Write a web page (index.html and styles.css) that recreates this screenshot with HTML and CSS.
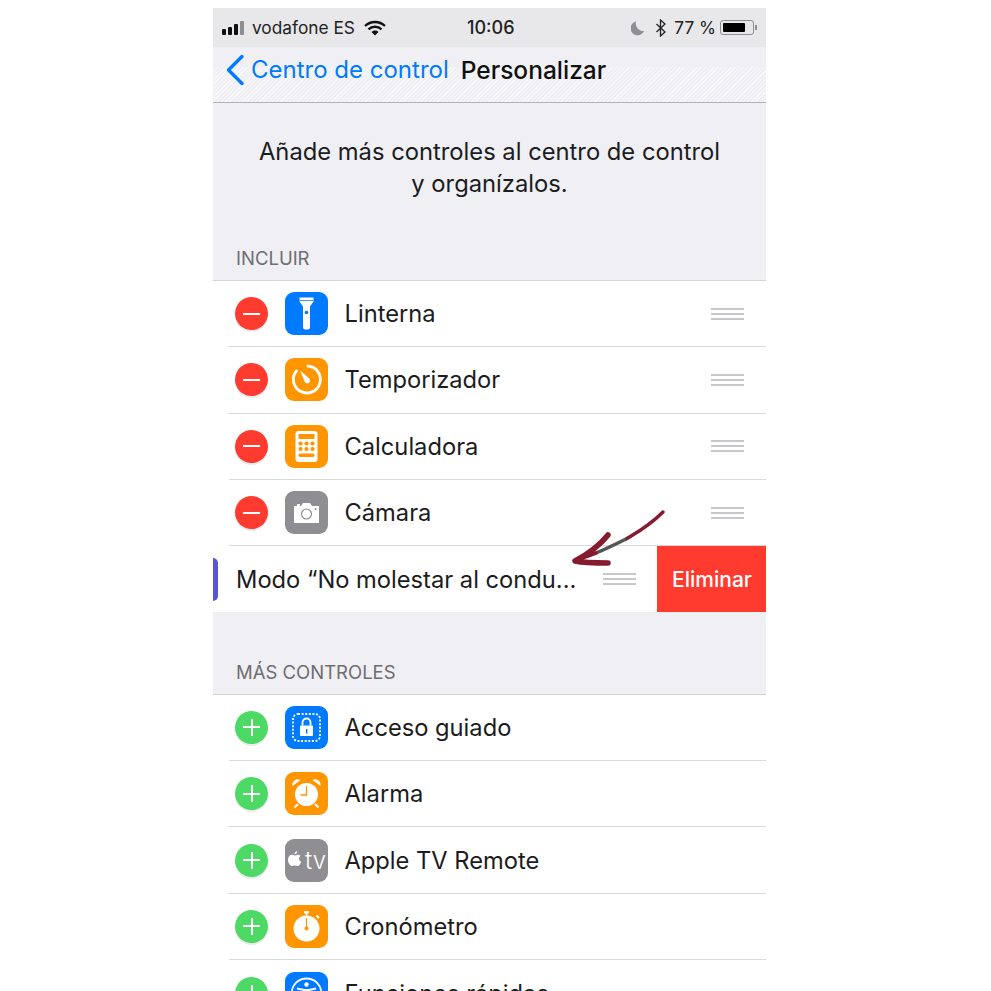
FILE: index.html
```html
<!DOCTYPE html>
<html lang="es">
<head>
    <meta charset="UTF-8">
    <title>Personalizar</title>
    <link rel="stylesheet" href="styles.css">
</head>
<body>
    <div class="phone">
        <div class="status-bar">
            <div class="status-left">
                <div class="signal"><i></i><i></i><i></i><i class="off"></i></div>
                <span>vodafone ES</span>
                <svg class="wifi" width="22" height="16" viewBox="0 0 22 16"><path d="M1 6a14.500 14.500 0 0 1 20 0" fill="none" stroke="#111" stroke-width="2.400"/><path d="M4.500 9.300a9.500 9.500 0 0 1 13 0" fill="none" stroke="#111" stroke-width="2.400"/><path d="M7.500 12a5 5 0 0 1 7 0L11 15.500z" fill="#111"/></svg>
            </div>
            <div class="status-time">10:06</div>
            <div class="status-right">
                <svg width="14" height="16" viewBox="0 0 14 16"><path d="M5 1.500a7 7 0 1 0 8 9.500a7.500 7.500 0 0 1-8-9.500z" fill="#8e8e93"/></svg>
                <svg class="bt" width="12" height="18" viewBox="0 0 12 18"><path d="M1.500 5l8.500 8-4.500 4V1l4.500 4-8.500 8" fill="none" stroke="#222" stroke-width="1.300"/></svg>
                <span>77 %</span>
                <div class="battery"><div class="battery-fill"></div></div>
                <div class="battery-tip"></div>
            </div>
        </div>
        <div class="nav-bar">
            <svg class="back" width="20" height="32" viewBox="0 0 20 32"><path d="M17 2.500L3.500 16L17 29.500" fill="none" stroke="#007aff" stroke-width="3.400" stroke-linecap="round" stroke-linejoin="round"/></svg>
            <span class="nav-back">Centro de control</span>
            <span class="nav-title">Personalizar</span>
        </div>
        <p class="intro">Añade más controles al centro de control<br>y organízalos.</p>

        <div class="section-label first">INCLUIR</div>
        <div class="list list-first">
            <div class="row">
                <div class="round minus"></div>
                <div class="app blue">
                    <svg width="43" height="43" viewBox="0 0 43 43"><path d="M14.500 5.500h14v4l-3.500 5V35a2.500 2.500 0 0 1-2.500 2.500h-2A2.500 2.500 0 0 1 18 35V14.500l-3.500-5z" fill="#fff"/><path d="M14.500 8.500h14" stroke="#007aff" stroke-width=".8"/><circle cx="21.500" cy="20.500" r="1.800" fill="#007aff"/></svg>
                </div>
                <div class="row-text">Linterna</div>
                <div class="handle"></div>
            </div>
            <div class="row">
                <div class="round minus"></div>
                <div class="app orange">
                    <svg width="43" height="43" viewBox="0 0 43 43"><path d="M23 8a13.500 13.500 0 1 1-11.500 4.800" fill="none" stroke="#fff" stroke-width="2.800" stroke-linecap="round"/><path d="M15 12.500l8.800 7.500a2.900 2.900 0 1 1-4 4z" fill="#fff"/></svg>
                </div>
                <div class="row-text">Temporizador</div>
                <div class="handle"></div>
            </div>
            <div class="row">
                <div class="round minus"></div>
                <div class="app orange">
                    <svg width="43" height="43" viewBox="0 0 43 43"><rect x="10.500" y="6" width="22" height="31" rx="3" fill="#fff"/><rect x="13.500" y="9" width="16" height="5" fill="#ff9500"/><g fill="#ff9500"><circle cx="15.500" cy="18.500" r="2.100"/><circle cx="21.500" cy="18.500" r="2.100"/><circle cx="27.500" cy="18.500" r="2.100"/><circle cx="15.500" cy="24" r="2.100"/><circle cx="21.500" cy="24" r="2.100"/><circle cx="27.500" cy="24" r="2.100"/><rect x="13.500" y="28.500" width="16" height="3.600" rx="1.800"/></g></svg>
                </div>
                <div class="row-text">Calculadora</div>
                <div class="handle"></div>
            </div>
            <div class="row">
                <div class="round minus"></div>
                <div class="app gray">
                    <svg width="43" height="43" viewBox="0 0 43 43"><path d="M9 15h7l2-3h7l2 3h7v17H9z" fill="#fff"/><rect x="12" y="13" width="3" height="2" fill="#fff"/><circle cx="21.500" cy="23" r="5" fill="none" stroke="#8e8e93" stroke-width="1.200"/><circle cx="30.500" cy="18" r="1" fill="#8e8e93"/></svg>
                </div>
                <div class="row-text">Cámara</div>
                <div class="handle"></div>
            </div>
            <div class="row row-swiped">
                <div class="app-sliver"></div>
                <div class="row-text">Modo “No molestar al condu...</div>
                <div class="handle"></div>
                <div class="delete">Eliminar</div>
            </div>
        </div>

        <div class="section-label">MÁS CONTROLES</div>
        <div class="list">
            <div class="row">
                <div class="round plus"></div>
                <div class="app blue">
                    <svg width="43" height="43" viewBox="0 0 43 43"><rect x="8" y="8" width="27" height="27" rx="5" fill="none" stroke="#fff" stroke-width="1.800" stroke-dasharray="2 1.600"/><rect x="15" y="19.500" width="13" height="10.500" rx="1" fill="#fff"/><path d="M17.500 19.500v-3a4 4 0 0 1 8 0v3" fill="none" stroke="#fff" stroke-width="1.800"/><rect x="21" y="23" width="1.400" height="4.500" fill="#007aff"/></svg>
                </div>
                <div class="row-text">Acceso guiado</div>
            </div>
            <div class="row">
                <div class="round plus"></div>
                <div class="app orange">
                    <svg width="43" height="43" viewBox="0 0 43 43"><circle cx="21.500" cy="22.500" r="11.500" fill="#fff"/><path d="M7.500 14a5.500 5.500 0 0 1 8-6z M35.500 14a5.500 5.500 0 0 0-8-6z" fill="#fff"/><path d="M13 32l-3.500 3.500M30 32l3.500 3.500" stroke="#fff" stroke-width="1.800"/><path d="M21.500 14v9h-6" fill="none" stroke="#ff9500" stroke-width="1.300"/></svg>
                </div>
                <div class="row-text">Alarma</div>
            </div>
            <div class="row">
                <div class="round plus"></div>
                <div class="app gray app-tv">
                    <svg width="15" height="17" viewBox="0 0 15 17"><path d="M7.500 4.500c1.200 0 2-.8 3.400-.8 1 0 2 .4 2.700 1.400-2.300 1.400-1.900 4.600.6 5.600-.7 2-2.100 4.300-3.500 4.300-1 0-1.400-.6-2.800-.6s-1.900.6-2.900.6C3 15 1 11.800 1 8.800c0-3 1.900-5 3.800-5 1.200 0 2 .7 2.700.7zM7.400 3.300C7.300 1.800 8.600.4 10.200.2c.2 1.600-1.300 3.100-2.800 3.100z" fill="#fff"/></svg>
                    <span>tv</span>
                </div>
                <div class="row-text">Apple TV Remote</div>
            </div>
            <div class="row">
                <div class="round plus"></div>
                <div class="app orange">
                    <svg width="43" height="43" viewBox="0 0 43 43"><circle cx="21.500" cy="23.500" r="13" fill="#fff"/><rect x="19" y="6" width="5" height="2.400" rx="1" fill="#fff"/><rect x="20.700" y="8" width="1.600" height="3" fill="#fff"/><path d="M31.500 10.500l2.500 2.500" stroke="#fff" stroke-width="2.200"/><path d="M21.500 13v9" stroke="#ff9500" stroke-width="1.200"/><circle cx="21.500" cy="23.500" r="2" fill="#ff9500"/></svg>
                </div>
                <div class="row-text">Cronómetro</div>
            </div>
            <div class="row">
                <div class="round plus"></div>
                <div class="app blue">
                    <svg width="43" height="43" viewBox="0 0 43 43"><circle cx="21.500" cy="21.500" r="15" fill="none" stroke="#fff" stroke-width="1.800"/><circle cx="21.500" cy="12.500" r="2.200" fill="#fff"/><path d="M12 16.500l7 1.500h5l7-1.500M21.500 18v6l-4 7M21.500 24l4 7" fill="none" stroke="#fff" stroke-width="2"/></svg>
                </div>
                <div class="row-text">Funciones rápidas</div>
            </div>
        </div>

        <!-- arrow drawn over the screenshot -->
        <svg class="arrow" width="110" height="70" viewBox="0 0 110 70">
            <path d="M93 6C78 21 66 27 56 33" fill="none" stroke="#861b30" stroke-width="3.500" stroke-linecap="round"/>
            <path d="M56 33C46 38 36 43 26 47" fill="none" stroke="#555" stroke-width="3.500"/>
            <path d="M26 47C18 50 12 52 5 55" fill="none" stroke="#861b30" stroke-width="4" stroke-linecap="round"/>
            <path d="M38 29C30 39 18 48 5 55C15 57 27 57 38 57" fill="none" stroke="#861b30" stroke-width="5.500" stroke-linecap="round" stroke-linejoin="round"/>
        </svg>
    </div>
</body>
</html>
```
FILE: styles.css
```css
html, body {
    margin: 0;
    height: 991px;
    overflow: hidden;
    background: #fff;
}
body {
    font-family: Inter, Roboto, "Liberation Sans", sans-serif;
    color: #111;
}
.phone {
    position: relative;
    width: 553px;
    height: 983px;
    margin: 8px 0 0 213px;
    background: #efeff4;
    overflow: hidden;
}
.status-bar {
    position: relative;
    display: flex;
    justify-content: space-between;
    align-items: center;
    height: 39px;
    padding: 0 9px 0 9px;
    background: #e8e8ea;
    font-size: 17.300px;
    color: #222;
}
.status-left, .status-right {
    display: flex;
    align-items: center;
}
.signal {
    display: flex;
    align-items: flex-end;
    gap: 2px;
    height: 14px;
    margin-right: 8px;
}
.signal i {
    width: 4px;
    height: 6px;
    background: #111;
    border-radius: 1px;
}
.signal i:nth-child(2) { height: 8px; }
.signal i:nth-child(3) { height: 11px; }
.signal i:nth-child(4) { height: 14px; }
.signal i.off { background: #8e8e93; }
.wifi { margin-left: 9px; }
.status-time {
    position: absolute;
    left: 254px;
    font-size: 18px;
    font-weight: 500;
}
.status-right svg { margin-right: 10px; }
.status-right .bt { margin-right: 7px; }
.battery {
    width: 34px;
    height: 15px;
    margin-left: 4px;
    padding: 2px;
    box-sizing: border-box;
    border: 1px solid #8e8e93;
    border-radius: 3px;
}
.battery-fill {
    width: 77%;
    height: 100%;
    background: #000;
    border-radius: 1px;
}
.battery-tip {
    width: 2px;
    height: 5px;
    margin-left: 1px;
    background: #8e8e93;
}
.nav-bar {
    display: flex;
    align-items: center;
    height: 56px;
    padding: 0 0 10px 12px;
    box-sizing: border-box;
    border-bottom: 1px solid #b4b4b8;
    background:
        repeating-linear-gradient(135deg, rgba(255, 255, 255, 0.55) 0 1px, rgba(255, 255, 255, 0) 1px 3px) 0 20px / 100% 35px no-repeat,
        #f0f0f4;
}
.back { margin-right: 6px; }
.nav-back {
    font-size: 24px;
    color: #007aff;
}
.nav-title {
    margin-left: 12px;
    font-size: 24.500px;
    font-weight: 500;
    color: #111;
}
.intro {
    margin: 0;
    padding-top: 33px;
    height: 123px;
    box-sizing: border-box;
    text-align: center;
    font-size: 23.750px;
    line-height: 32px;
    color: #1c1c1e;
}
.section-label {
    display: flex;
    align-items: flex-end;
    height: 80.600px;
    padding: 0 0 11px 23px;
    box-sizing: border-box;
    font-size: 18.500px;
    color: #6d6d72;
}
.section-label.first {
    height: 54px;
}
.list {
    background: #fff;
    border-top: 1px solid #d4d4d8;
    border-bottom: 1px solid #d4d4d8;
}
.list-first {
    border-bottom-color: #eeeef2;
}
.row {
    display: flex;
    align-items: center;
    height: 66.300px;
    margin-left: 16px;
    padding: 0 22px 0 6px;
    box-sizing: border-box;
    border-bottom: 1px solid #d9d9dc;
    background: #fff;
}
.row:last-child { border-bottom: none; }
.round {
    position: relative;
    flex: none;
    width: 33px;
    height: 33px;
    border-radius: 50%;
    box-shadow: 0 2px 0 #ececf0;
}
.round::before, .plus::after {
    content: "";
    position: absolute;
    left: 8px;
    top: 15.500px;
    width: 17px;
    height: 2px;
    background: #fff;
}
.plus::after {
    left: 15.500px;
    top: 8px;
    width: 2px;
    height: 17px;
}
.minus { background: #ff3b30; }
.plus { background: #4cd964; }
.app {
    display: flex;
    align-items: center;
    justify-content: center;
    flex: none;
    width: 43px;
    height: 43px;
    margin-left: 17px;
    border-radius: 9px;
}
.blue { background: #007aff; }
.orange { background: #ff9500; }
.gray { background: #8e8e93; }
.app-tv {
    gap: 3px;
    color: #fff;
    font-size: 24px;
    font-weight: 300;
}
.app-tv svg { margin-top: -1px; }
.row-text {
    flex: 1;
    margin-left: 16.500px;
    font-size: 23.700px;
    color: #1c1c1e;
    white-space: nowrap;
}
.handle {
    position: relative;
    flex: none;
    width: 33px;
    height: 12px;
    border-top: 2px solid #c7c7cc;
    border-bottom: 2px solid #c7c7cc;
    box-sizing: border-box;
}
.handle::before {
    content: "";
    position: absolute;
    left: 0;
    right: 0;
    top: 3px;
    height: 2px;
    background: #c7c7cc;
}
.row-swiped {
    position: relative;
    margin-left: 0;
    padding: 0;
    height: 66px;
}
.app-sliver {
    flex: none;
    width: 5px;
    height: 43px;
    background: #5856d6;
    border-radius: 0 8px 8px 0;
}
.row-swiped .row-text {
    flex: none;
    width: 367px;
    margin-left: 18px;
}
.delete {
    display: flex;
    align-items: center;
    justify-content: center;
    flex: none;
    width: 110px;
    height: 100%;
    margin-left: 21px;
    background: #ff3b30;
    color: #fff;
    font-size: 21px;
    font-weight: 500;
}
.arrow {
    position: absolute;
    left: 357px;
    top: 498px;
}
```
